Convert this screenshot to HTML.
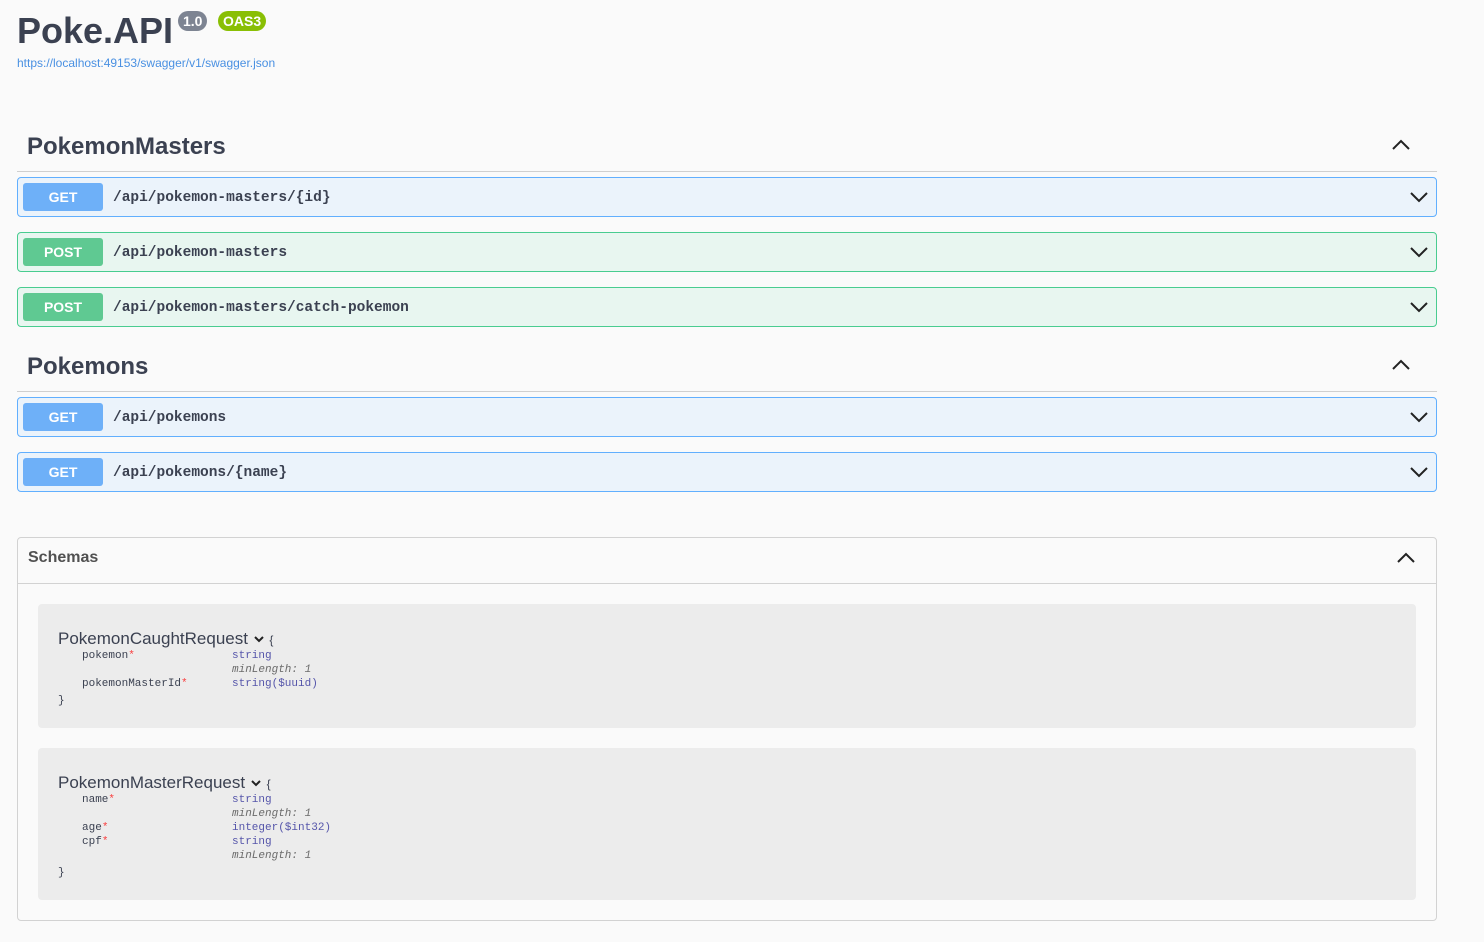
<!DOCTYPE html>
<html><head><meta charset="utf-8"><style>
*{box-sizing:border-box;margin:0;padding:0}
body{width:1484px;height:942px;background:#fafafa;font-family:"Liberation Sans",Arial,sans-serif;color:#3b4151;position:relative;overflow:hidden}
.a{position:absolute}
.title{left:17px;top:10px;font-size:36px;font-weight:bold;color:#3b4151}
.badge{top:11px;height:20px;border-radius:10px;color:#fff;font-size:14px;font-weight:bold;padding:2px 5px;line-height:16px}
.url{left:17px;top:56px;font-size:12px;color:#4990e2}
.tag{left:27px;font-size:24px;font-weight:bold}
.line{left:17px;width:1420px;height:1px;background:#cfcfcf}
.op{left:17px;width:1420px;height:40px;border-radius:4px;border:1px solid}
.get{background:#ebf3fb;border-color:#61affe}
.post{background:#e8f6f0;border-color:#49cc90}
.m{position:absolute;left:5px;top:5px;width:80px;height:28px;border-radius:3px;color:#fff;font-weight:bold;font-size:14px;text-align:center;line-height:28px}
.get .m{background:#6eb0f8}.post .m{background:#5fc992}
.p{position:absolute;left:95px;top:12px;font-family:"Liberation Mono","DejaVu Sans Mono",monospace;font-size:14.5px;font-weight:bold;color:#3b4151}
.chev{position:absolute;right:8px;top:12px}
.schemas{left:17px;top:537px;width:1420px;height:384px;border:1px solid #d2d2d2;border-radius:4px}
.model{left:38px;width:1378px;background:#ececec;border-radius:4px}
.mn{font-size:17px;color:#3b4151}
.mono{font-family:"Liberation Mono","DejaVu Sans Mono",monospace;font-size:11px;color:#3b4151}
.t{color:#55a;}
.i{color:#6b6b6b;font-style:italic}
.r{color:#f93e3e}
</style></head><body>
<div class="a title">Poke.API</div>
<div class="a badge" style="left:178px;background:#7d8492">1.0</div>
<div class="a badge" style="left:218px;background:#89bf04">OAS3</div>
<div class="a url">https://localhost:49153/swagger/v1/swagger.json</div>

<div class="a tag" style="top:133px">PokemonMasters</div>
<svg class="a" style="left:1392px;top:138px" width="18" height="14" viewBox="0 0 18 14"><path d="M1 11 L9 3 L17 11" fill="none" stroke="#222" stroke-width="2"/></svg>
<div class="a line" style="top:171px"></div>
<div class="a op get" style="top:177px"><div class="m">GET</div><div class="p">/api/pokemon-masters/{id}</div><svg class="chev" width="18" height="14" viewBox="0 0 18 14"><path d="M1 3 L9 11 L17 3" fill="none" stroke="#222" stroke-width="2"/></svg></div>
<div class="a op post" style="top:232px"><div class="m">POST</div><div class="p">/api/pokemon-masters</div><svg class="chev" width="18" height="14" viewBox="0 0 18 14"><path d="M1 3 L9 11 L17 3" fill="none" stroke="#222" stroke-width="2"/></svg></div>
<div class="a op post" style="top:287px"><div class="m">POST</div><div class="p">/api/pokemon-masters/catch-pokemon</div><svg class="chev" width="18" height="14" viewBox="0 0 18 14"><path d="M1 3 L9 11 L17 3" fill="none" stroke="#222" stroke-width="2"/></svg></div>

<div class="a tag" style="top:353px">Pokemons</div>
<svg class="a" style="left:1392px;top:358px" width="18" height="14" viewBox="0 0 18 14"><path d="M1 11 L9 3 L17 11" fill="none" stroke="#222" stroke-width="2"/></svg>
<div class="a line" style="top:391px"></div>
<div class="a op get" style="top:397px"><div class="m">GET</div><div class="p">/api/pokemons</div><svg class="chev" width="18" height="14" viewBox="0 0 18 14"><path d="M1 3 L9 11 L17 3" fill="none" stroke="#222" stroke-width="2"/></svg></div>
<div class="a op get" style="top:452px"><div class="m">GET</div><div class="p">/api/pokemons/{name}</div><svg class="chev" width="18" height="14" viewBox="0 0 18 14"><path d="M1 3 L9 11 L17 3" fill="none" stroke="#222" stroke-width="2"/></svg></div>

<div class="a schemas"></div>
<div class="a" style="left:28px;top:549px;font-size:16px;font-weight:bold;color:#505050">Schemas</div>
<svg class="a" style="left:1397px;top:551px" width="18" height="14" viewBox="0 0 18 14"><path d="M1 11 L9 3 L17 11" fill="none" stroke="#222" stroke-width="2"/></svg>
<div class="a" style="left:18px;top:583px;width:1418px;height:1px;background:#d2d2d2"></div>

<div class="a model" style="top:604px;height:124px"></div>
<div class="a mn" style="left:58px;top:629px">PokemonCaughtRequest <svg width="12" height="10" viewBox="0 0 12 10"><path d="M2 3 L6 7 L10 3" fill="none" stroke="#222" stroke-width="2"/></svg> <span style="font-size:12px">{</span></div>
<div class="a mono" style="left:82px;top:650px">pokemon<span class="r">*</span></div>
<div class="a mono t" style="left:232px;top:650px">string</div>
<div class="a mono i" style="left:232px;top:664px">minLength: 1</div>
<div class="a mono" style="left:82px;top:678px">pokemonMasterId<span class="r">*</span></div>
<div class="a mono t" style="left:232px;top:678px">string($uuid)</div>
<div class="a mono" style="left:58px;top:695px">}</div>

<div class="a model" style="top:748px;height:152px"></div>
<div class="a mn" style="left:58px;top:773px">PokemonMasterRequest <svg width="12" height="10" viewBox="0 0 12 10"><path d="M2 3 L6 7 L10 3" fill="none" stroke="#222" stroke-width="2"/></svg> <span style="font-size:12px">{</span></div>
<div class="a mono" style="left:82px;top:794px">name<span class="r">*</span></div>
<div class="a mono t" style="left:232px;top:794px">string</div>
<div class="a mono i" style="left:232px;top:808px">minLength: 1</div>
<div class="a mono" style="left:82px;top:822px">age<span class="r">*</span></div>
<div class="a mono t" style="left:232px;top:822px">integer($int32)</div>
<div class="a mono" style="left:82px;top:836px">cpf<span class="r">*</span></div>
<div class="a mono t" style="left:232px;top:836px">string</div>
<div class="a mono i" style="left:232px;top:850px">minLength: 1</div>
<div class="a mono" style="left:58px;top:867px">}</div>
</body></html>
